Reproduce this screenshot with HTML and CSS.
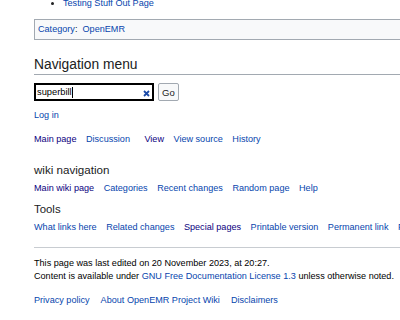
FILE: index.html
```html
<!DOCTYPE html>
<html>
    <head>
        <meta charset="utf-8">
        <title>Navigation menu</title>
        <link rel="stylesheet" href="styles.css">
    </head>
    <body>
        <div class="page">
            <ul class="subpages">
                <li><a href="#">Testing Stuff Out Page</a></li>
            </ul>
            <div class="catlinks">
                <a href="#">Category</a>:&nbsp; <a href="#">OpenEMR</a>
            </div>

            <h2 class="navhead">Navigation menu</h2>
            <form class="search">
                <div class="searchbox">
                    <span class="query">superbill</span>
                    <svg class="clear" width="7" height="7" viewBox="0 0 7 7">
                        <path d="M1 1 L6 6 M6 1 L1 6" stroke="#1a4aa8" stroke-width="1.8"/>
                    </svg>
                </div>
                <button type="button" class="go">Go</button>
            </form>

            <div class="links login">
                <a href="#">Log in</a>
            </div>
            <div class="links views">
                <a class="visited" href="#">Main page</a>
                <a href="#">Discussion</a>
                <a class="visited gap" href="#">View</a>
                <a href="#">View source</a>
                <a href="#">History</a>
            </div>

            <h3 class="portal">wiki navigation</h3>
            <div class="links portal-links">
                <a class="visited" href="#">Main wiki page</a>
                <a href="#">Categories</a>
                <a href="#">Recent changes</a>
                <a href="#">Random page</a>
                <a href="#">Help</a>
            </div>

            <h3 class="portal tools">Tools</h3>
            <div class="links tool-links">
                <a href="#">What links here</a>
                <a href="#">Related changes</a>
                <a class="visited" href="#">Special pages</a>
                <a href="#">Printable version</a>
                <a href="#">Permanent link</a>
                <a href="#">Page information</a>
            </div>

            <div class="footer">
                <p>This page was last edited on 20 November 2023, at 20:27.</p>
                <p>Content is available under <a href="#">GNU Free Documentation License 1.3</a> unless otherwise noted.</p>
                <div class="links places">
                    <a href="#">Privacy policy</a>
                    <a href="#">About OpenEMR Project Wiki</a>
                    <a href="#">Disclaimers</a>
                </div>
            </div>
        </div>
    </body>
</html>
```
FILE: styles.css
```css
html, body { margin: 0; overflow: hidden; background: #fff; }
body { font-family: "Liberation Sans", Arial, sans-serif; color: #202122; font-size: 9.1px; }
a { color: #0645ad; text-decoration: none; }
a.visited { color: #0b0080; }

.page { width: 520px; padding-left: 34px; }

.subpages { margin: -4px 0 0 0; padding-left: 29px; line-height: 14px; }
.subpages li { list-style: disc; }

.catlinks { margin-top: 9px; border: 1px solid #a2a9b1; background: #f8f9fa; padding: 4px 3px; line-height: 11px; }

.navhead { font-size: 13.8px; font-weight: normal; margin: 16px 0 0 0; line-height: 17px; padding-bottom: 1px; border-bottom: 1px solid #a2a9b1; }

.search { display: flex; align-items: center; gap: 4px; margin-top: 8px; }
.searchbox { display: flex; align-items: center; justify-content: space-between; width: 113px; height: 14px; border: 2px solid #000; padding: 0 2px 0 1px; background: #fff; }
.query { border-right: 1px solid #000; line-height: 11px; color: #000; font-size: 9.3px; }
.clear { margin-top: 2px; }
.go { font-family: "Liberation Sans", Arial, sans-serif; font-size: 9.5px; height: 18px; padding: 0 3px; border: 1px solid #a2a9b1; border-radius: 2px; background: #f8f9fa; color: #202122; }

.links { display: flex; gap: 9.5px; line-height: 14px; white-space: nowrap; }
.login { margin-top: 7px; }
.views { margin-top: 10px; }
.views .gap { margin-left: 5px; }

.portal { font-size: 11.6px; font-weight: normal; margin: 15.5px 0 0 0; line-height: 15px; }
.portal-links { margin-top: 4.5px; }
.portal.tools { font-size: 11.4px; margin-top: 6.5px; }
.tool-links { margin-top: 3.5px; }

.footer { margin-top: 12.5px; border-top: 1px solid #c8ccd1; padding-top: 9px; }
.footer p { margin: 0; line-height: 13px; color: #000; }
.places { margin-top: 11px; gap: 11px; line-height: 13px; }
```
